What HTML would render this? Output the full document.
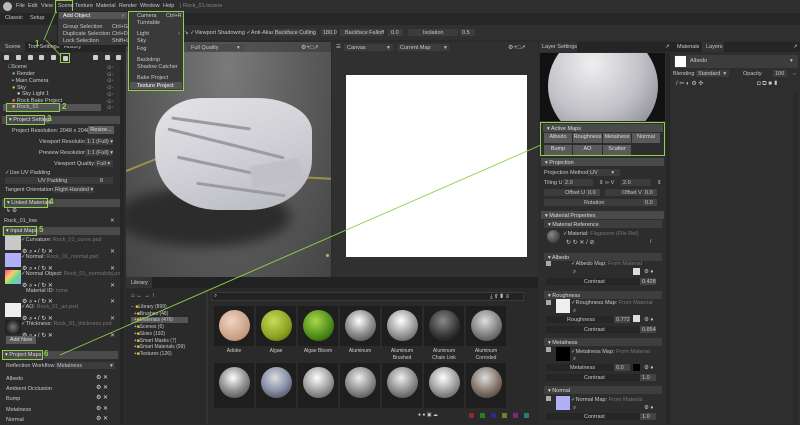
<!DOCTYPE html>
<html><head><meta charset="utf-8">
<style>
*{margin:0;padding:0;box-sizing:border-box}
body{width:800px;height:424px;overflow:hidden;background:#2b2b2b;font-family:"Liberation Sans",sans-serif;font-size:5.5px;color:#c8c8c8;position:relative}
.a{position:absolute}
.t{position:absolute;white-space:nowrap;line-height:1}
.hd{position:absolute;background:#4a4a4a;height:8px}
.hd span{position:absolute;left:4px;top:1.5px;white-space:nowrap;color:#ddd}
.g{outline:1px solid #8fd14f}
.gl{color:#8fd14f;font-weight:bold;font-size:8px}
.btn{position:absolute;background:#5a5a5a;color:#ddd;text-align:center;line-height:9px;height:10px}
.fld{position:absolute;background:#3c3c3c;height:7px}
.tile{position:absolute;width:40px;height:40px;background:#1e1e1e}
.sph{position:absolute;left:5px;top:4px;width:31px;height:31px;border-radius:50%}
.lbl{position:absolute;width:40px;text-align:center;font-size:5px;line-height:6.5px;color:#ccc}
.ic{position:absolute;width:5px;height:5px;background:#cfcfcf;border-radius:1px}
.st{position:absolute;height:3px;background:#9a9aa2;border-radius:2px}
</style></head><body>
<!-- menu bar -->
<div class="a" style="left:0;top:0;width:800px;height:13px;background:#2e2e2e"></div>
<div class="a" style="left:3px;top:2px;width:9px;height:9px;border-radius:50%;background:#bbb"></div>
<div class="t" style="left:16px;top:4px">File</div>
<div class="t" style="left:28px;top:4px">Edit</div>
<div class="t" style="left:41px;top:4px">View</div>
<div class="a g" style="left:56px;top:1px;width:16px;height:11px"></div>
<div class="t" style="left:58px;top:4px">Scene</div>
<div class="t" style="left:75px;top:4px">Texture</div>
<div class="t" style="left:96px;top:4px">Material</div>
<div class="t" style="left:119px;top:4px">Render</div>
<div class="t" style="left:140px;top:4px">Window</div>
<div class="t" style="left:163px;top:4px">Help</div>
<div class="t" style="left:180px;top:4px;color:#888">| Rock_01.tscene</div>
<!-- tabs row -->
<div class="a" style="left:0;top:13px;width:800px;height:12px;background:#262626"></div>
<div class="t" style="left:5px;top:16px">Classic</div>
<div class="t" style="left:30px;top:16px">Setup</div>
<!-- toolbar -->
<div class="a" style="left:0;top:25px;width:800px;height:15px;background:#303030"></div>
<div class="t" style="left:184px;top:31px">↘ ✓Viewport Shadowing ✓Anti-Aliased</div>
<div class="fld" style="left:273px;top:29px;width:43px;background:#3d3d3d"></div><div class="t" style="left:275px;top:31px">Backface Culling</div>
<div class="fld" style="left:321px;top:29px;width:15px"></div><div class="t" style="left:323px;top:31px">180.0</div>
<div class="fld" style="left:340px;top:29px;width:43px;background:#3d3d3d"></div><div class="t" style="left:345px;top:31px">Backface Falloff</div>
<div class="fld" style="left:388px;top:29px;width:15px"></div><div class="t" style="left:391px;top:31px">0.0</div>
<div class="fld" style="left:408px;top:29px;width:50px"></div><div class="t" style="left:423px;top:31px">Isolation</div>
<div class="fld" style="left:460px;top:29px;width:15px"></div><div class="t" style="left:462px;top:31px">0.5</div>

<!-- LEFT PANEL -->
<div class="a" style="left:0;top:40px;width:125px;height:384px;background:#2d2d2d"></div>
<div class="a" style="left:0;top:42px;width:125px;height:10px;background:#252525"></div>
<div class="a" style="left:0;top:42px;width:25px;height:10px;background:#333"></div>
<div class="t" style="left:5px;top:45px">Scene</div>
<div class="t" style="left:28px;top:45px">Tool Settings</div>
<div class="t" style="left:64px;top:45px">History</div>
<div class="ic" style="left:4px;top:55px"></div><div class="ic" style="left:16px;top:55px"></div><div class="ic" style="left:28px;top:55px"></div><div class="ic" style="left:39px;top:55px"></div><div class="ic" style="left:51px;top:55px"></div>
<div class="a g" style="left:61px;top:54px;width:8px;height:8px"></div><div class="ic" style="left:62.5px;top:55.5px"></div>
<div class="ic" style="left:93px;top:55px"></div><div class="ic" style="left:105px;top:55px"></div><div class="ic" style="left:116px;top:55px"></div>
<div class="t" style="left:8px;top:65px">□Scene</div>
<div class="t" style="left:12px;top:72px"><span style="color:#6c6">●</span> Render</div>
<div class="t" style="left:12px;top:79px">▪ Main Camera</div>
<div class="t" style="left:12px;top:86px"><span style="color:#e8c040">●</span> Sky</div>
<div class="t" style="left:17px;top:92px"><span style="color:#e8e0a0">●</span> Sky Light 1</div>
<div class="t" style="left:12px;top:99px"><span style="color:#d66">■</span> Rock Bake Project</div>
<div class="a" style="left:3px;top:104px;width:98px;height:7px;background:#555"></div>
<div class="a g" style="left:7px;top:104px;width:52px;height:7px"></div>
<div class="t" style="left:12px;top:105px"><span style="color:#d96">■</span> Rock_01</div>
<div class="t gl" style="left:62px;top:103px">2</div>
<div class="t" style="left:107px;top:65px;line-height:6.7px;color:#999">⊙◦<br>⊙◦<br>⊙◦<br>⊙◦<br>⊙◦<br>⊙◦<br>⊙◦</div>
<div class="t gl" style="left:35px;top:40px">1</div>

<div class="hd" style="left:2px;top:116px;width:120px"></div>
<div class="a g" style="left:7px;top:116px;width:37px;height:8px"></div><div class="t" style="left:9px;top:118px;color:#ddd">▾ Project Settings</div><div class="t gl" style="left:47px;top:115px">3</div>
<div class="t" style="left:12px;top:129px">Project Resolution: 2048 x 2048</div>
<div class="btn" style="left:88px;top:126px;width:26px;height:8px;line-height:8px">Resize...</div>
<div class="t" style="left:39px;top:140px">Viewport Resolution:</div><div class="fld" style="left:85px;top:138px;width:28px"></div><div class="t" style="left:87px;top:140px">1:1 (Full) ▾</div>
<div class="t" style="left:39px;top:151px">Preview Resolution:</div><div class="fld" style="left:85px;top:149px;width:28px"></div><div class="t" style="left:87px;top:151px">1:1 (Full) ▾</div>
<div class="t" style="left:54px;top:162px">Viewport Quality:</div><div class="fld" style="left:95px;top:160px;width:18px"></div><div class="t" style="left:97px;top:162px">Full ▾</div>
<div class="t" style="left:5px;top:171px">✓Use UV Padding</div>
<div class="fld" style="left:5px;top:177px;width:108px;background:#3a3a3a"></div><div class="t" style="left:38px;top:179px">UV Padding</div><div class="t" style="left:100px;top:179px">8</div>
<div class="t" style="left:5px;top:188px">Tangent Orientation</div><div class="fld" style="left:53px;top:186px;width:41px"></div><div class="t" style="left:55px;top:188px">Right-Handed ▾</div>
<div class="hd" style="left:2px;top:199px;width:120px"></div>
<div class="a g" style="left:5px;top:199px;width:42px;height:8px"></div><div class="t" style="left:7px;top:201px;color:#ddd">▾ Linked Materials</div><div class="t gl" style="left:49px;top:198px">4</div>
<div class="t" style="left:6px;top:209px">↳ ⚙</div>
<div class="t" style="left:4px;top:219px">Rock_01_low</div><div class="t" style="left:110px;top:219px">✕</div>
<div class="hd" style="left:2px;top:227px;width:120px"></div>
<div class="a g" style="left:4px;top:227px;width:32px;height:8px"></div><div class="t" style="left:6px;top:229px;color:#ddd">▾ Input Maps</div><div class="t gl" style="left:39px;top:226px">5</div>
<!-- input maps -->
<div class="a" style="left:5px;top:236px;width:16px;height:14px;background:#c8c8c8"></div>
<div class="a" style="left:5px;top:253px;width:16px;height:14px;background:#b0b0f8"></div>
<div class="a" style="left:5px;top:270px;width:16px;height:14px;background:linear-gradient(135deg,#f4a 0%,#fc6 35%,#6d8 60%,#8af 100%)"></div>
<div class="a" style="left:5px;top:303px;width:16px;height:14px;background:#eee"></div>
<div class="a" style="left:5px;top:320px;width:16px;height:14px;background:radial-gradient(circle,#777,#222 70%)"></div>
<div class="t" style="left:21px;top:238px">✓Curvature: <span style="color:#777">Rock_01_curve.psd</span></div>
<div class="t" style="left:21px;top:255px">✓Normal: <span style="color:#777">Rock_01_normal.psd</span></div>
<div class="t" style="left:21px;top:272px">✓Normal Object: <span style="color:#777">Rock_01_normalobj.psd</span></div>
<div class="t" style="left:26px;top:289px">Material ID: <span style="color:#777">none</span></div>
<div class="t" style="left:21px;top:305px">✓AO: <span style="color:#777">Rock_01_ao.psd</span></div>
<div class="t" style="left:21px;top:322px">✓Thickness: <span style="color:#777">Rock_01_thickness.psd</span></div>
<div class="t" style="left:22px;top:244px;font-size:6px;color:#ddd;line-height:16.8px">⚙ ⌕ ▪ / ↻ ✕<br>⚙ ⌕ ▪ / ↻ ✕<br>⚙ ⌕ ▪ / ↻ ✕<br>⚙ ⌕ ▪ / ↻ ✕<br>⚙ ⌕ ▪ / ↻ ✕<br>⚙ ⌕ ▪ / ↻ ✕</div>
<div class="t" style="left:110px;top:244px;font-size:6px;line-height:16.8px">✕<br>✕<br>✕<br>✕<br>✕<br>✕</div>
<div class="btn" style="left:6px;top:336px;width:30px;height:8px;line-height:8px">Add New</div>
<div class="hd" style="left:2px;top:351px;width:116px"></div>
<div class="a g" style="left:3px;top:351px;width:39px;height:8px"></div><div class="t" style="left:5px;top:353px;color:#ddd">▾ Project Maps</div><div class="t gl" style="left:44px;top:350px">6</div>
<div class="t" style="left:6px;top:364px">Reflection Workflow:</div><div class="fld" style="left:55px;top:362px;width:60px"></div><div class="t" style="left:57px;top:364px">Metalness</div><div class="t" style="left:110px;top:364px">▾</div>
<div class="t" style="left:6px;top:374px;line-height:10.2px">Albedo<br>Ambient Occlusion<br>Bump<br>Metalness<br>Normal</div>
<div class="t" style="left:96px;top:373px;line-height:10.2px;font-size:6px;color:#ddd">⚙ ✕<br>⚙ ✕<br>⚙ ✕<br>⚙ ✕<br>⚙ ✕</div>
<div class="a" style="left:120px;top:60px;width:4px;height:364px;background:#262626"></div>

<!-- VIEWPORT -->
<div class="a" style="left:126px;top:42px;width:205px;height:235px;overflow:hidden;background:radial-gradient(ellipse at 50% 10%,#7a7a7a 0%,#606060 45%,#444 100%)">
  <div class="a" style="left:-5px;top:112px;width:60px;height:2px;background:#9a9248;transform:rotate(-22deg);transform-origin:0 0;top:130px"></div>
  <div class="a" style="left:170px;top:135px;width:40px;height:2px;background:#9a9248;transform:rotate(3deg)"></div>
  <div class="a" style="left:-10px;top:145px;width:175px;height:60px;border-radius:50%;background:#2c2c2c;filter:blur(6px)"></div>
  <div class="a" style="left:29px;top:56px;width:157px;height:112px;border-radius:30% 35% 40% 40%/35% 30% 45% 50%;background:linear-gradient(160deg,#e4e4e8 0%,#d0d0d6 50%,#b8b8c0 100%)"></div>
  <div class="st" style="left:45px;top:80px;width:80px;transform:rotate(8deg)"></div>
  <div class="st" style="left:40px;top:100px;width:120px;transform:rotate(14deg)"></div>
  <div class="st" style="left:50px;top:125px;width:110px;transform:rotate(12deg)"></div>
  <div class="st" style="left:70px;top:146px;width:90px;transform:rotate(8deg)"></div>
  <div class="a" style="left:125px;top:120px;width:50px;height:22px;background:#c0c0c6;transform:rotate(-10deg)"></div>
  <div class="a" style="left:200px;top:212px;width:3px;height:3px;border-radius:50%;background:#8fd14f"></div>
</div>
<div class="a" style="left:126px;top:42px;width:205px;height:10px;background:rgba(60,60,60,0.6)"></div>
<div class="fld" style="left:187px;top:44px;width:57px;background:#4a4a4a"></div><div class="t" style="left:191px;top:46px">Full Quality</div><div class="t" style="left:237px;top:46px">▾</div>
<div class="t" style="left:301px;top:45px;font-size:6px">⚙+□↗</div>

<!-- dropdown menus -->
<div class="a" style="left:57px;top:11px;width:72px;height:35px;background:#3a3a3a;border:1px solid #222"></div>
<div class="a" style="left:59px;top:12px;width:68px;height:7px;background:#555"></div>
<div class="t" style="left:63px;top:14px;color:#fff">Add Object</div><div class="t" style="left:122px;top:14px">›</div>
<div class="t" style="left:63px;top:25px">Group Selection</div><div class="t" style="left:112px;top:25px">Ctrl+G</div>
<div class="t" style="left:63px;top:32px">Duplicate Selection</div><div class="t" style="left:112px;top:32px">Ctrl+D</div>
<div class="t" style="left:63px;top:39px">Lock Selection</div><div class="t" style="left:112px;top:39px">Shift+L</div>
<div class="a" style="left:129px;top:12px;width:54px;height:78px;background:#3a3a3a;outline:1px solid #8fd14f"></div>
<div class="t" style="left:137px;top:14px">Camera</div><div class="t" style="left:166px;top:14px">Ctrl+R</div>
<div class="t" style="left:137px;top:21px">Turntable</div>
<div class="t" style="left:137px;top:32px">Light</div><div class="t" style="left:178px;top:32px">›</div>
<div class="t" style="left:137px;top:39px">Sky</div>
<div class="t" style="left:137px;top:47px">Fog</div>
<div class="t" style="left:137px;top:58px">Backdrop</div>
<div class="t" style="left:137px;top:65px">Shadow Catcher</div>
<div class="t" style="left:137px;top:76px">Bake Project</div>
<div class="a" style="left:130px;top:82px;width:52px;height:7px;background:#555"></div>
<div class="t" style="left:137px;top:84px;color:#fff">Texture Project</div>

<!-- CANVAS -->
<div class="a" style="left:332px;top:42px;width:206px;height:235px;background:#303030"></div>
<div class="t" style="left:336px;top:45px">☰</div>
<div class="fld" style="left:344px;top:44px;width:49px;background:#3c3c3c"></div><div class="t" style="left:347px;top:46px">Canvas</div><div class="t" style="left:387px;top:46px">▾</div>
<div class="fld" style="left:398px;top:44px;width:51px;background:#3c3c3c"></div><div class="t" style="left:400px;top:46px">Current Map</div><div class="t" style="left:444px;top:46px">▾</div>
<div class="t" style="left:508px;top:45px;font-size:6px">⚙+□↗</div>
<div class="a" style="left:346px;top:75px;width:181px;height:182px;background:#fff"></div>

<!-- LIBRARY -->
<div class="a" style="left:126px;top:277px;width:412px;height:147px;background:#2a2a2a"></div>
<div class="a" style="left:126px;top:277px;width:412px;height:11px;background:#222"></div>
<div class="a" style="left:126px;top:277px;width:26px;height:11px;background:#333"></div>
<div class="t" style="left:131px;top:281px">Library</div>
<div class="t" style="left:131px;top:293px;font-size:6px">⌂ ← → ↑</div>
<div class="t" style="left:131px;top:304px;line-height:6.7px;font-size:5px">− <span style="color:#e8c040">■</span>Library (899)<br>&nbsp;&nbsp;+<span style="color:#e8c040">■</span>Brushes (48)<br><span style="background:#555">&nbsp;&nbsp;+<span style="color:#e8c040">■</span>Materials (476)&nbsp;&nbsp;&nbsp;&nbsp;&nbsp;&nbsp;&nbsp;&nbsp;&nbsp;&nbsp;&nbsp;</span><br>&nbsp;&nbsp;+<span style="color:#e8c040">■</span>Scenes (6)<br>&nbsp;&nbsp;+<span style="color:#e8c040">■</span>Skies (192)<br>&nbsp;&nbsp;+<span style="color:#e8c040">■</span>Smart Masks (7)<br>&nbsp;&nbsp;+<span style="color:#e8c040">■</span>Smart Materials (99)<br>&nbsp;&nbsp;+<span style="color:#e8c040">■</span>Textures (126)</div>
<div class="a" style="left:206px;top:290px;width:2px;height:134px;background:#333"></div>
<div class="a" style="left:211px;top:292px;width:313px;height:9px;background:#222;border:1px solid #3a3a3a"></div>
<div class="t" style="left:214px;top:294px">⌕</div>
<div class="t" style="left:490px;top:294px;font-size:6px">⤓ ⇧ ▮ ≡</div>
<div class="tile" style="left:214px;top:306px"><div class="sph" style="background:radial-gradient(circle at 40% 35%,#f2d4c0,#c49a80 70%,#6a4d3e)"></div></div>
<div class="tile" style="left:256px;top:306px"><div class="sph" style="background:radial-gradient(circle at 40% 35%,#c8dc5a,#8aa020 60%,#4a5a10)"></div></div>
<div class="tile" style="left:298px;top:306px"><div class="sph" style="background:radial-gradient(circle at 40% 35%,#a8d84a,#4a8a18 60%,#1e4008)"></div></div>
<div class="tile" style="left:340px;top:306px"><div class="sph" style="background:radial-gradient(circle at 45% 35%,#fff,#999 45%,#333)"></div></div>
<div class="tile" style="left:382px;top:306px"><div class="sph" style="background:radial-gradient(circle at 45% 35%,#fff,#aaa 45%,#444)"></div></div>
<div class="tile" style="left:424px;top:306px"><div class="sph" style="background:radial-gradient(circle at 45% 35%,#888,#333 60%,#111)"></div></div>
<div class="tile" style="left:466px;top:306px"><div class="sph" style="background:radial-gradient(circle at 45% 35%,#ddd,#888 50%,#333)"></div></div>
<div class="lbl" style="left:214px;top:348px">Adobe</div><div class="lbl" style="left:256px;top:348px">Algae</div><div class="lbl" style="left:298px;top:348px">Algae Bloom</div><div class="lbl" style="left:340px;top:348px">Aluminum</div><div class="lbl" style="left:382px;top:348px">Aluminum<br>Brushed</div><div class="lbl" style="left:424px;top:348px">Aluminum<br>Chain Link</div><div class="lbl" style="left:466px;top:348px">Aluminum<br>Corroded</div>
<div class="tile" style="left:214px;top:363px;height:45px"><div class="sph" style="background:radial-gradient(circle at 45% 35%,#fff,#999 45%,#333)"></div></div>
<div class="tile" style="left:256px;top:363px;height:45px"><div class="sph" style="background:radial-gradient(circle at 45% 35%,#ddd,#8890a8 50%,#333)"></div></div>
<div class="tile" style="left:298px;top:363px;height:45px"><div class="sph" style="background:radial-gradient(circle at 45% 35%,#fff,#aaa 45%,#444)"></div></div>
<div class="tile" style="left:340px;top:363px;height:45px"><div class="sph" style="background:radial-gradient(circle at 45% 35%,#eee,#999 45%,#333)"></div></div>
<div class="tile" style="left:382px;top:363px;height:45px"><div class="sph" style="background:radial-gradient(circle at 45% 35%,#eee,#999 45%,#333)"></div></div>
<div class="tile" style="left:424px;top:363px;height:45px"><div class="sph" style="background:radial-gradient(circle at 45% 35%,#fff,#aaa 45%,#444)"></div></div>
<div class="tile" style="left:466px;top:363px;height:45px"><div class="sph" style="background:radial-gradient(circle at 45% 35%,#ddd,#8a7a70 50%,#332a28)"></div></div>
<div class="a" style="left:211px;top:408px;width:327px;height:16px;background:#2a2a2a"></div>
<div class="t" style="left:418px;top:413px;font-size:5px">● ● ▣ ☁</div>
<div class="a" style="left:469px;top:413px;width:5px;height:5px;background:#8a2a2a"></div>
<div class="a" style="left:480px;top:413px;width:5px;height:5px;background:#2a7a2a"></div>
<div class="a" style="left:491px;top:413px;width:5px;height:5px;background:#2a2a8a"></div>
<div class="a" style="left:502px;top:413px;width:5px;height:5px;background:#7a7a2a"></div>
<div class="a" style="left:513px;top:413px;width:5px;height:5px;background:#7a2a7a"></div>
<div class="a" style="left:524px;top:413px;width:5px;height:5px;background:#2a7a7a"></div>

<!-- LAYER SETTINGS -->
<div class="a" style="left:538px;top:40px;width:134px;height:384px;background:#2d2d2d"></div>
<div class="a" style="left:538px;top:42px;width:134px;height:10px;background:#252525"></div>
<div class="a" style="left:539px;top:42px;width:38px;height:10px;background:#333"></div>
<div class="t" style="left:542px;top:45px">Layer Settings</div><div class="t" style="left:665px;top:45px">↗</div>
<div class="a" style="left:540px;top:53px;width:125px;height:68px;background:#111;overflow:hidden"><div style="position:absolute;left:8px;top:-22px;width:110px;height:110px;border-radius:50%;background:radial-gradient(circle at 40% 30%,#f0f0f2,#c0c0c6 50%,#707078)"></div></div>
<div class="a" style="left:666px;top:53px;width:4px;height:371px;background:#262626"></div>
<div class="hd" style="left:543px;top:124px;width:120px"><span>▾ Active Maps</span></div>
<div class="a g" style="left:541px;top:123px;width:123px;height:32px"></div>
<div class="btn" style="left:544px;top:133px;width:28px">Albedo</div>
<div class="btn" style="left:573px;top:133px;width:29px">Roughness</div>
<div class="btn" style="left:603px;top:133px;width:28px">Metalness</div>
<div class="btn" style="left:632px;top:133px;width:28px">Normal</div>
<div class="btn" style="left:544px;top:145px;width:28px">Bump</div>
<div class="btn" style="left:573px;top:145px;width:29px">AO</div>
<div class="btn" style="left:603px;top:145px;width:28px">Scatter</div>
<div class="hd" style="left:541px;top:158px;width:123px"><span>▾ Projection</span></div>
<div class="t" style="left:544px;top:171px">Projection Method</div><div class="fld" style="left:588px;top:169px;width:32px"></div><div class="t" style="left:590px;top:171px">UV &nbsp;&nbsp;&nbsp;&nbsp;&nbsp;&nbsp;&nbsp;&nbsp;▾</div>
<div class="t" style="left:544px;top:181px">Tiling U</div><div class="fld" style="left:563px;top:179px;width:30px"></div><div class="t" style="left:565px;top:181px">2.0</div><div class="t" style="left:599px;top:181px">⇕ ∞ V</div><div class="fld" style="left:621px;top:179px;width:30px"></div><div class="t" style="left:623px;top:181px">2.0</div><div class="t" style="left:657px;top:181px">⇕</div>
<div class="fld" style="left:544px;top:189px;width:50px"></div><div class="t" style="left:565px;top:191px">Offset U</div><div class="fld" style="left:586px;top:189px;width:14px;background:#444"></div><div class="t" style="left:588px;top:191px">0.0</div>
<div class="fld" style="left:605px;top:189px;width:50px"></div><div class="t" style="left:622px;top:191px">Offset V</div><div class="fld" style="left:643px;top:189px;width:14px;background:#444"></div><div class="t" style="left:645px;top:191px">0.0</div>
<div class="fld" style="left:544px;top:199px;width:113px"></div><div class="t" style="left:584px;top:201px">Rotation</div><div class="fld" style="left:643px;top:199px;width:14px;background:#444"></div><div class="t" style="left:645px;top:201px">0.0</div>
<div class="hd" style="left:541px;top:211px;width:123px"><span>▾ Material Properties</span></div>
<div class="hd" style="left:544px;top:220px;width:118px;background:#3e3e3e"><span>▾ Material Reference</span></div>
<div class="a" style="left:547px;top:230px;width:13px;height:13px;border-radius:50%;background:radial-gradient(circle at 35% 35%,#888,#222)"></div>
<div class="t" style="left:563px;top:232px">✓Material: <span style="color:#777">Flagstone (File Ref)</span></div>
<div class="t" style="left:566px;top:240px;font-size:6px">↻ ↻ ✕ / ⊘</div><div class="t" style="left:650px;top:240px">/</div>
<div class="hd" style="left:544px;top:253px;width:118px;background:#3e3e3e"><span>▾ Albedo</span></div>
<div class="a" style="left:546px;top:261px;width:5px;height:5px;background:#aaa"></div>
<div class="t" style="left:571px;top:262px">✓Albedo Map: <span style="color:#777">From Material</span></div>
<div class="t" style="left:573px;top:270px">⌕</div><div class="a" style="left:633px;top:268px;width:7px;height:7px;background:#ddd"></div><div class="t" style="left:644px;top:270px">⚙ ♦</div>
<div class="fld" style="left:546px;top:278px;width:110px;background:#262626"></div><div class="t" style="left:584px;top:280px">Contrast</div><div class="fld" style="left:640px;top:278px;width:16px;background:#444"></div><div class="t" style="left:642px;top:280px">0.428</div>
<div class="hd" style="left:544px;top:291px;width:118px;background:#3e3e3e"><span>▾ Roughness</span></div>
<div class="a" style="left:546px;top:300px;width:5px;height:5px;background:#aaa"></div>
<div class="a" style="left:556px;top:299px;width:14px;height:14px;background:#eee"></div>
<div class="t" style="left:571px;top:301px">✓Roughness Map: <span style="color:#777">From Material</span></div>
<div class="t" style="left:573px;top:309px">⌕</div>
<div class="fld" style="left:546px;top:316px;width:85px;background:#262626"></div><div class="t" style="left:567px;top:318px">Roughness</div><div class="fld" style="left:614px;top:316px;width:16px;background:#444"></div><div class="t" style="left:616px;top:318px">0.772</div><div class="a" style="left:633px;top:315px;width:7px;height:7px;background:#ddd"></div><div class="t" style="left:644px;top:318px">⚙ ♦</div>
<div class="fld" style="left:546px;top:326px;width:110px;background:#262626"></div><div class="t" style="left:584px;top:328px">Contrast</div><div class="fld" style="left:640px;top:326px;width:16px;background:#444"></div><div class="t" style="left:642px;top:328px">0.854</div>
<div class="hd" style="left:544px;top:338px;width:118px;background:#3e3e3e"><span>▾ Metalness</span></div>
<div class="a" style="left:546px;top:347px;width:5px;height:5px;background:#aaa"></div>
<div class="a" style="left:556px;top:347px;width:14px;height:14px;background:#000"></div>
<div class="t" style="left:571px;top:350px">✓Metalness Map: <span style="color:#777">From Material</span></div>
<div class="t" style="left:573px;top:357px">⌕</div>
<div class="fld" style="left:546px;top:364px;width:85px;background:#262626"></div><div class="t" style="left:570px;top:366px">Metalness</div><div class="fld" style="left:614px;top:364px;width:16px;background:#444"></div><div class="t" style="left:616px;top:366px">0.0</div><div class="a" style="left:633px;top:364px;width:7px;height:7px;background:#000"></div><div class="t" style="left:644px;top:366px">⚙ ♦</div>
<div class="fld" style="left:546px;top:374px;width:110px;background:#262626"></div><div class="t" style="left:584px;top:376px">Contrast</div><div class="fld" style="left:640px;top:374px;width:16px;background:#444"></div><div class="t" style="left:642px;top:376px">1.0</div>
<div class="hd" style="left:544px;top:386px;width:118px;background:#3e3e3e"><span>▾ Normal</span></div>
<div class="a" style="left:546px;top:396px;width:5px;height:5px;background:#aaa"></div>
<div class="a" style="left:556px;top:396px;width:14px;height:14px;background:#b0b0f8"></div>
<div class="t" style="left:571px;top:398px">✓Normal Map: <span style="color:#777">From Material</span></div>
<div class="t" style="left:573px;top:406px">⌕</div><div class="t" style="left:644px;top:406px">⚙ ♦</div>
<div class="fld" style="left:546px;top:413px;width:110px;background:#262626"></div><div class="t" style="left:584px;top:415px">Contrast</div><div class="fld" style="left:640px;top:413px;width:16px;background:#444"></div><div class="t" style="left:642px;top:415px">1.0</div>

<!-- MATERIALS / LAYERS -->
<div class="a" style="left:672px;top:40px;width:128px;height:384px;background:#2e2e2e"></div>
<div class="a" style="left:672px;top:42px;width:128px;height:10px;background:#252525"></div>
<div class="t" style="left:677px;top:45px">Materials</div>
<div class="a" style="left:702px;top:42px;width:22px;height:10px;background:#333"></div><div class="t" style="left:706px;top:45px">Layers</div><div class="t" style="left:793px;top:45px">↗</div>
<div class="a" style="left:674px;top:55px;width:124px;height:13px;background:#3c3c3c"></div>
<div class="a" style="left:675px;top:56px;width:11px;height:11px;background:#fff"></div>
<div class="t" style="left:690px;top:59px">Albedo</div><div class="t" style="left:790px;top:59px">▾</div>
<div class="t" style="left:673px;top:72px">Blending</div><div class="fld" style="left:696px;top:70px;width:33px"></div><div class="t" style="left:698px;top:72px">Standard &nbsp;▾</div>
<div class="t" style="left:743px;top:72px">Opacity</div><div class="fld" style="left:773px;top:70px;width:14px"></div><div class="t" style="left:775px;top:72px">100</div><div class="t" style="left:792px;top:72px">⇔</div>
<div class="t" style="left:676px;top:81px;font-size:6px">/ ✂ ◐ ⚙ ✣</div>
<div class="t" style="left:757px;top:81px;font-size:6px">◘ ⧉ ■ ▮</div>
<div class="a" style="left:793px;top:92px;width:5px;height:332px;background:#2a2a2a"></div>

<!-- green annotation lines on top -->
<svg class="a" style="left:0;top:0;pointer-events:none" width="800" height="424" viewBox="0 0 800 424"><line x1="44" y1="40" x2="56" y2="11" stroke="#8fd14f" stroke-width="0.8"/><line x1="46" y1="40" x2="61" y2="56" stroke="#8fd14f" stroke-width="0.8"/><line x1="60" y1="355" x2="541" y2="145" stroke="#8fd14f" stroke-width="0.9"/></svg>
</body></html>
